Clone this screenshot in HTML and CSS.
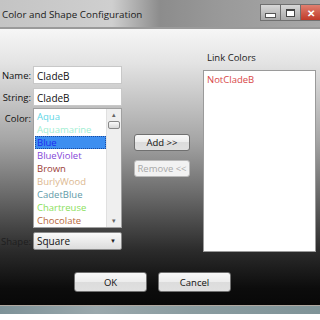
FILE: index.html
```html
<!DOCTYPE html>
<html lang="en">
<head>
    <meta charset="UTF-8">
    <meta name="viewport" content="width=device-width, initial-scale=1.0">
    <title>Color and Shape Configuration</title>
    <link rel="stylesheet" href="styles.css">
</head>
<body>

    <div class="window">
        <div class="titlebar">
            <span class="title">Color and Shape Configuration</span>
            <div class="caption-buttons">
                <div class="cap-btn"><span class="min-glyph"></span></div>
                <div class="cap-btn"><span class="max-glyph"></span></div>
                <div class="cap-btn close"><span class="close-glyph">&#x2715;</span></div>
            </div>
        </div>

        <div class="client">
            <div class="main">
                <div class="fields">
                    <label class="field-label">Name:</label>
                    <div class="textbox">CladeB</div>

                    <label class="field-label">String:</label>
                    <div class="textbox">CladeB</div>

                    <label class="field-label top">Color:</label>
                    <div class="listbox color-list">
                        <ul class="items">
                            <li style="color: #5ed6e6">Aqua</li>
                            <li style="color: #a2eed2">Aquamarine</li>
                            <li class="selected" style="color: #1c2cf0">Blue</li>
                            <li style="color: #8548d8">BlueViolet</li>
                            <li style="color: #9c4038">Brown</li>
                            <li style="color: #dcb890">BurlyWood</li>
                            <li style="color: #5f9aa8">CadetBlue</li>
                            <li style="color: #8ae05a">Chartreuse</li>
                            <li style="color: #b8683c">Chocolate</li>
                        </ul>
                        <div class="scrollbar">
                            <span class="arrow">&#9652;</span>
                            <span class="thumb"></span>
                            <span class="spacer"></span>
                            <span class="arrow">&#9662;</span>
                        </div>
                    </div>

                    <label class="field-label shape">Shape:</label>
                    <div class="combobox">
                        <span>Square</span>
                        <span class="drop">&#9660;</span>
                    </div>
                </div>

                <div class="transfer">
                    <button class="btn small">Add &gt;&gt;</button>
                    <button class="btn small" disabled>Remove &lt;&lt;</button>
                </div>

                <div class="links">
                    <div class="links-label">Link Colors</div>
                    <div class="listbox link-list">
                        <div class="link-item">NotCladeB</div>
                    </div>
                </div>
            </div>

            <div class="footer">
                <button class="btn wide">OK</button>
                <button class="btn wide">Cancel</button>
            </div>
        </div>

        <div class="bottom-edge"></div>
    </div>

</body>
</html>
```

FILE: styles.css
```css
body {
    margin: 0;
    background-color: #fff;
    font-family: "Open Sans", "Noto Sans", sans-serif;
    font-size: 9.5px;
}

.window {
    width: 320px;
    height: 320px;
    display: flex;
    flex-direction: column;
    overflow: hidden;
}

/* title bar */
.titlebar {
    height: 27px;
    display: flex;
    align-items: flex-start;
    justify-content: space-between;
    background: linear-gradient(90deg, #c4c4c4 0%, #cfcfcf 35%, #8c8c8c 50%, #9a9a9a 70%, #a8a8a8 100%);
    border-bottom: 2px solid #9a9a9a;
}

.title {
    margin-top: 8px;
    padding-left: 2px;
    font-size: 9.8px;
    color: #1a1a1a;
}

.caption-buttons {
    display: flex;
    margin-top: 4px;
}

.cap-btn {
    width: 20px;
    height: 17px;
    display: flex;
    align-items: center;
    justify-content: center;
    background: linear-gradient(#d8d8d8, #a8a8a8);
    border: 1px solid #707070;
    border-right: none;
    box-sizing: border-box;
}

.cap-btn.close {
    background: linear-gradient(#e08070, #c03a28);
}

.min-glyph {
    width: 9px;
    height: 3px;
    background: #fff;
    border: 1px solid #555;
    margin-top: 5px;
}

.max-glyph {
    width: 7px;
    height: 5px;
    border: 1px solid #444;
    border-top-width: 2px;
    background: #fff;
}

.close-glyph {
    color: #fff;
    font-size: 10px;
    font-weight: bold;
}

/* client area */
.client {
    flex: 1;
    display: flex;
    flex-direction: column;
    background: linear-gradient(#f6f6f6 0%, #e4e4e4 12%, #a6a6a6 40%, #6a6a6a 60%, #2c2c2c 80%, #0c0c0c 94%, #080808 100%);
}

.main {
    display: flex;
    align-items: flex-start;
}

.fields {
    margin-top: 37px;
    display: grid;
    grid-template-columns: 33px 89px;
    row-gap: 4px;
    align-items: center;
}

.field-label {
    text-align: right;
    padding-right: 2px;
    color: #111;
    white-space: nowrap;
}

.field-label.top {
    align-self: start;
    padding-top: 2px;
}

.field-label.shape {
    color: #1e1e1e;
}

.textbox {
    height: 18px;
    box-sizing: border-box;
    background: #fff;
    border: 1px solid #c8c8c8;
    padding: 2px 3px;
    font-size: 10px;
    color: #111;
}

.listbox {
    background: #fff;
    border: 1px solid #a0a0a0;
    box-sizing: border-box;
}

.color-list {
    height: 120px;
    display: flex;
    margin-top: -2px;
}

.items {
    list-style: none;
    margin: 0;
    padding: 1px 0 0 1px;
    flex: 1;
}

.items li {
    height: 13px;
    line-height: 13px;
    padding-left: 2px;
    white-space: nowrap;
}

.items li.selected {
    background-color: #3d8ef0;
    border: 1px dotted #1a4aa0;
    box-sizing: border-box;
    line-height: 11px;
    padding-left: 1px;
}

.scrollbar {
    width: 14px;
    display: flex;
    flex-direction: column;
    align-items: center;
    background: #efefef;
    border-left: 1px solid #e0e0e0;
}

.arrow {
    font-size: 7px;
    color: #666;
    height: 12px;
    line-height: 12px;
}

.thumb {
    width: 10px;
    height: 6px;
    border: 1px solid #888;
    border-radius: 2px;
    background: linear-gradient(#fafafa, #d8d8d8);
}

.spacer {
    flex: 1;
}

.combobox {
    height: 18px;
    box-sizing: border-box;
    display: flex;
    justify-content: space-between;
    align-items: center;
    padding: 0 5px 0 3px;
    background: linear-gradient(#fafafa, #dcdcdc);
    border: 1px solid #8a8a8a;
    border-radius: 2px;
    font-size: 10px;
    color: #111;
}

.drop {
    font-size: 6px;
    color: #222;
}

/* add / remove */
.transfer {
    margin: 105px 13px 0 12px;
    display: flex;
    flex-direction: column;
    gap: 9px;
}

.btn {
    font-family: "Open Sans", "Noto Sans", sans-serif;
    font-size: 9.5px;
    color: #111;
    background: linear-gradient(#f8f8f8, #ececec 50%, #dcdcdc 50%, #e0e0e0);
    border: 1px solid #707070;
    border-radius: 3px;
    padding: 0;
    box-sizing: border-box;
    white-space: nowrap;
}

.btn.small {
    width: 56px;
    height: 17px;
    line-height: 14px;
}

.btn[disabled] {
    color: #a8a8a8;
    background: #f2f2f2;
    border-color: #b8b8b8;
}

.btn.wide {
    width: 73px;
    height: 20px;
}

/* link colors */
.links {
    margin-top: 22px;
}

.links-label {
    height: 19px;
    padding-left: 4px;
    color: #222;
}

.link-list {
    width: 113px;
    height: 182px;
    border-color: #9a9a9a;
}

.link-item {
    padding: 2px 0 0 3px;
    color: #d84848;
}

.footer {
    display: flex;
    gap: 11px;
    margin: 20px 0 0 74px;
}

.bottom-edge {
    height: 8px;
    background: linear-gradient(90deg, #7d9298, #9aa8ac 30%, #8a9ca0 60%, #7f9498);
    border-top: 1px solid #b0a8a0;
    margin-bottom: 6px;
}
```
